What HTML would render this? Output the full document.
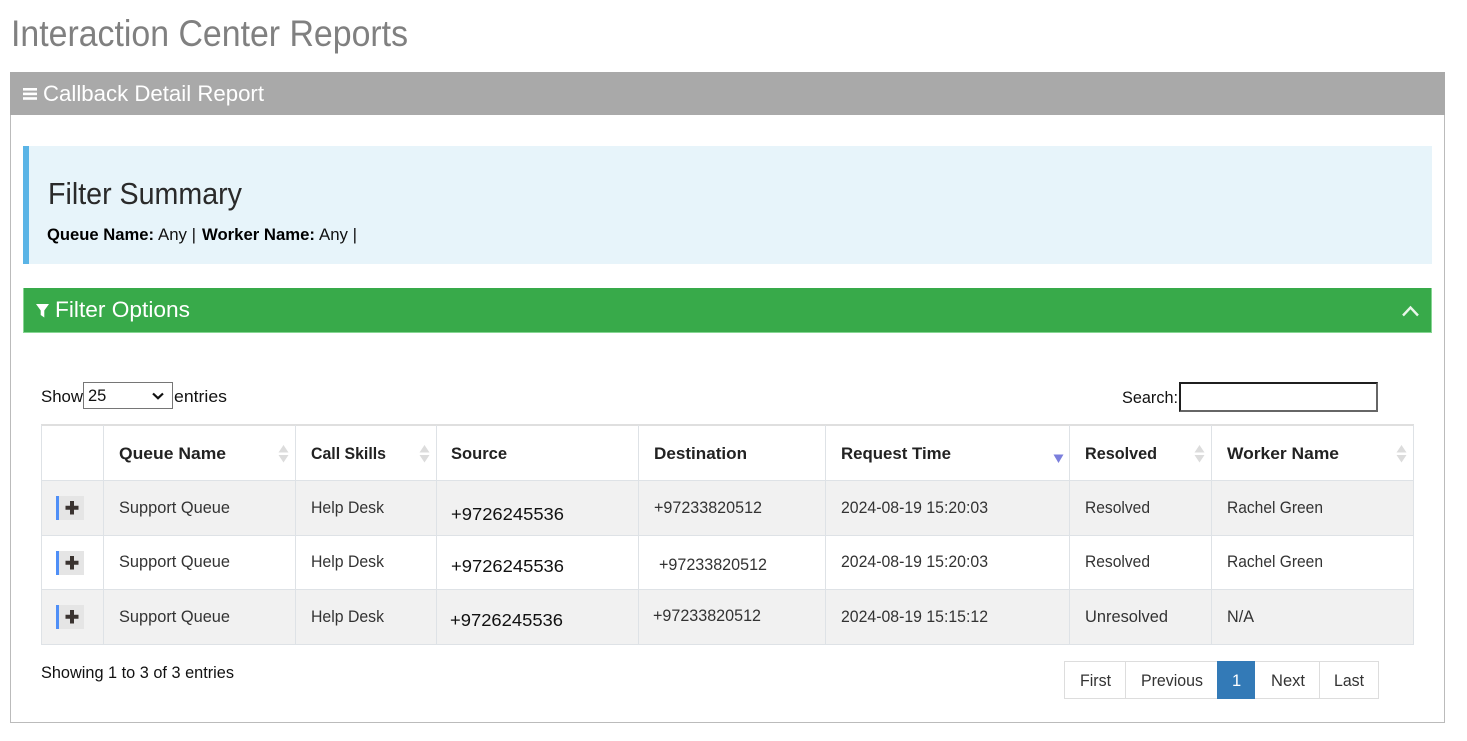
<!DOCTYPE html>
<html lang="en"><head><meta charset="utf-8"><title>Interaction Center Reports</title>
<style>
html,body{margin:0;padding:0;background:#fff;width:1467px;height:741px;overflow:hidden}
.b{position:absolute;box-sizing:border-box}
svg{position:absolute;left:0;top:0;pointer-events:none}
text{font-family:"Liberation Sans",sans-serif;font-size:16.5px;fill:#333;white-space:pre}
.th{font-weight:bold;fill:#222;font-size:16.5px}
.blk{fill:#111}
.num{fill:#111;font-size:17.5px}
select{position:absolute;left:83px;top:382px;width:90px;height:27px;box-sizing:border-box;font:16.5px "Liberation Sans",sans-serif;background:#fff;color:#111;border:1px solid #767676;border-radius:0;padding:0 0 0 4px;margin:0;appearance:none;-webkit-appearance:none}
input{position:absolute;left:1179px;top:382px;width:199px;height:30px;box-sizing:border-box;border:2px solid;border-color:#1f1f1f #666 #666 #1f1f1f;background:#fff;margin:0;padding:1px 2px}
</style></head><body>
<div class="b" style="left:10px;top:72px;width:1435px;height:651px;border:1px solid #bbb"></div>
<div class="b" style="left:10px;top:72px;width:1435px;height:43px;background:#a9a9a9"></div>
<div class="b" style="left:23px;top:146px;width:1409px;height:118px;background:#e7f4fa;border-left:6px solid #5ab4e6"></div>
<div class="b" style="left:23px;top:288px;width:1409px;height:45px;background:#38aa4a;border:1px solid #86d693;border-top:0"></div>
<select><option>25</option><option>50</option><option>100</option></select>
<input type="text">
<svg width="1467" height="741" viewBox="0 0 1467 741">
<path d="M153 393.500L158 398.200L163 393.500" fill="none" stroke="#111" stroke-width="2.200"/>
<!-- header icons -->
<g fill="#fff"><rect x="23" y="88" width="14" height="2.600"/><rect x="23" y="92.600" width="14" height="2.600"/><rect x="23" y="97.200" width="14" height="2.600"/></g>
<path d="M36 304H49L44.300 310.500V317.500L40.700 315V310.500Z" fill="#fff"/>
<path d="M1403 315.500L1410.500 307.500L1418 315.500" fill="none" stroke="#e9f6ea" stroke-width="2.400"/>

<!-- table -->
<rect x="42" y="481" width="1372" height="54" fill="#f1f1f1"/>
<rect x="42" y="590" width="1372" height="54" fill="#f1f1f1"/>
<g fill="#dee2e6">
<rect x="41" y="424" width="1373" height="2" fill="#dfdfdf"/>
<rect x="41" y="480" width="1373" height="1"/><rect x="41" y="535" width="1373" height="1"/><rect x="41" y="589" width="1373" height="1"/><rect x="41" y="644" width="1373" height="1"/>
<rect x="41" y="425" width="1" height="220"/><rect x="103" y="425" width="1" height="220"/><rect x="295" y="425" width="1" height="220"/><rect x="436" y="425" width="1" height="220"/><rect x="638" y="425" width="1" height="220"/><rect x="825" y="425" width="1" height="220"/><rect x="1069" y="425" width="1" height="220"/><rect x="1211" y="425" width="1" height="220"/><rect x="1413" y="425" width="1" height="220"/>
</g>
<!-- sort arrows -->
<g fill="#dcdcdc">
<path d="M283.500 445L288.500 452.500H278.500Z"/><path d="M283.500 462.500L288.500 455H278.500Z"/>
<path d="M424.500 445L429.500 452.500H419.500Z"/><path d="M424.500 462.500L429.500 455H419.500Z"/>
<path d="M1199.500 445L1204.500 452.500H1194.500Z"/><path d="M1199.500 462.500L1204.500 455H1194.500Z"/>
<path d="M1401.500 445L1406.500 452.500H1396.500Z"/><path d="M1401.500 462.500L1406.500 455H1396.500Z"/>
</g>
<path d="M1058.500 463L1063.500 454.500H1053.500Z" fill="#7b7fdc"/>
<!-- expand buttons -->
<g><rect x="56" y="496" width="28" height="24" fill="#e5e5e5"/><rect x="56" y="496" width="3" height="24" fill="#4f8ff7"/><path d="M70 501H74V505.800H78.500V509.800H74V514.500H70V509.800H65.500V505.800H70Z" fill="#3a3330"/></g>
<g><rect x="56" y="551" width="28" height="24" fill="#e5e5e5"/><rect x="56" y="551" width="3" height="24" fill="#4f8ff7"/><path d="M70 556H74V560.800H78.500V564.800H74V569.500H70V564.800H65.500V560.800H70Z" fill="#3a3330"/></g>
<g><rect x="56" y="605" width="28" height="24" fill="#e5e5e5"/><rect x="56" y="605" width="3" height="24" fill="#4f8ff7"/><path d="M70 610H74V614.800H78.500V618.800H74V623.500H70V618.800H65.500V614.800H70Z" fill="#3a3330"/></g>
<!-- pagination -->
<rect x="1064.500" y="661.500" width="314" height="37" fill="#fff" stroke="#ddd"/>
<rect x="1125" y="662" width="1" height="36" fill="#ddd"/><rect x="1319" y="662" width="1" height="36" fill="#ddd"/>
<rect x="1217" y="661" width="38" height="38" fill="#337ab7"/>

<!-- text -->
<text x="11" y="46" textLength="397" lengthAdjust="spacingAndGlyphs" style="font-size:37px;fill:#808080">Interaction Center Reports</text>
<text x="43" y="101" textLength="221" lengthAdjust="spacingAndGlyphs" style="font-size:22.500px;fill:#fff">Callback Detail Report</text>
<text x="48" y="204" textLength="194" lengthAdjust="spacingAndGlyphs" style="font-size:31px;fill:#2a2a2a">Filter Summary</text>
<text x="47" y="240" textLength="107" lengthAdjust="spacingAndGlyphs" style="font-weight:bold;fill:#000">Queue Name:</text>
<text x="158" y="240" textLength="38" lengthAdjust="spacingAndGlyphs" style="fill:#111">Any |</text>
<text x="202" y="240" textLength="113" lengthAdjust="spacingAndGlyphs" style="font-weight:bold;fill:#000">Worker Name:</text>
<text x="319" y="240" textLength="38" lengthAdjust="spacingAndGlyphs" style="fill:#111">Any |</text>
<text x="55" y="317" textLength="135" lengthAdjust="spacingAndGlyphs" style="font-size:22.500px;fill:#fff">Filter Options</text>
<text class="blk" x="41" y="402" textLength="42" lengthAdjust="spacingAndGlyphs">Show</text>
<text class="blk" x="174" y="402" textLength="53" lengthAdjust="spacingAndGlyphs">entries</text>
<text class="blk" x="1122" y="403" textLength="56" lengthAdjust="spacingAndGlyphs">Search:</text>

<text class="th" x="119" y="459" textLength="107" lengthAdjust="spacingAndGlyphs">Queue Name</text>
<text class="th" x="311" y="459" textLength="75" lengthAdjust="spacingAndGlyphs">Call Skills</text>
<text class="th" x="451" y="459" textLength="56" lengthAdjust="spacingAndGlyphs">Source</text>
<text class="th" x="654" y="459" textLength="93" lengthAdjust="spacingAndGlyphs">Destination</text>
<text class="th" x="841" y="459" textLength="110" lengthAdjust="spacingAndGlyphs">Request Time</text>
<text class="th" x="1085" y="459" textLength="72" lengthAdjust="spacingAndGlyphs">Resolved</text>
<text class="th" x="1227" y="459" textLength="112" lengthAdjust="spacingAndGlyphs">Worker Name</text>

<text x="119" y="513" textLength="111" lengthAdjust="spacingAndGlyphs">Support Queue</text>
<text x="311" y="513" textLength="73" lengthAdjust="spacingAndGlyphs">Help Desk</text>
<text class="num" x="451" y="520" textLength="113" lengthAdjust="spacingAndGlyphs">+9726245536</text>
<text x="654" y="513" textLength="108" lengthAdjust="spacingAndGlyphs">+97233820512</text>
<text x="841" y="513" textLength="147" lengthAdjust="spacingAndGlyphs">2024-08-19 15:20:03</text>
<text x="1085" y="513" textLength="65" lengthAdjust="spacingAndGlyphs">Resolved</text>
<text x="1227" y="513" textLength="96" lengthAdjust="spacingAndGlyphs">Rachel Green</text>

<text x="119" y="567" textLength="111" lengthAdjust="spacingAndGlyphs">Support Queue</text>
<text x="311" y="567" textLength="73" lengthAdjust="spacingAndGlyphs">Help Desk</text>
<text class="num" x="451" y="572" textLength="113" lengthAdjust="spacingAndGlyphs">+9726245536</text>
<text x="659" y="570" textLength="108" lengthAdjust="spacingAndGlyphs">+97233820512</text>
<text x="841" y="567" textLength="147" lengthAdjust="spacingAndGlyphs">2024-08-19 15:20:03</text>
<text x="1085" y="567" textLength="65" lengthAdjust="spacingAndGlyphs">Resolved</text>
<text x="1227" y="567" textLength="96" lengthAdjust="spacingAndGlyphs">Rachel Green</text>

<text x="119" y="622" textLength="111" lengthAdjust="spacingAndGlyphs">Support Queue</text>
<text x="311" y="622" textLength="73" lengthAdjust="spacingAndGlyphs">Help Desk</text>
<text class="num" x="450" y="626" textLength="113" lengthAdjust="spacingAndGlyphs">+9726245536</text>
<text x="653" y="621" textLength="108" lengthAdjust="spacingAndGlyphs">+97233820512</text>
<text x="841" y="622" textLength="147" lengthAdjust="spacingAndGlyphs">2024-08-19 15:15:12</text>
<text x="1085" y="622" textLength="83" lengthAdjust="spacingAndGlyphs">Unresolved</text>
<text x="1227" y="622" textLength="27" lengthAdjust="spacingAndGlyphs">N/A</text>

<text class="blk" x="41" y="678" textLength="193" lengthAdjust="spacingAndGlyphs">Showing 1 to 3 of 3 entries</text>
<text x="1080" y="686" textLength="31" lengthAdjust="spacingAndGlyphs">First</text>
<text x="1141" y="686" textLength="62" lengthAdjust="spacingAndGlyphs">Previous</text>
<text x="1232" y="686" style="fill:#fff">1</text>
<text x="1271" y="686" textLength="34" lengthAdjust="spacingAndGlyphs">Next</text>
<text x="1334" y="686" textLength="30" lengthAdjust="spacingAndGlyphs">Last</text>
</svg>
</body></html>
